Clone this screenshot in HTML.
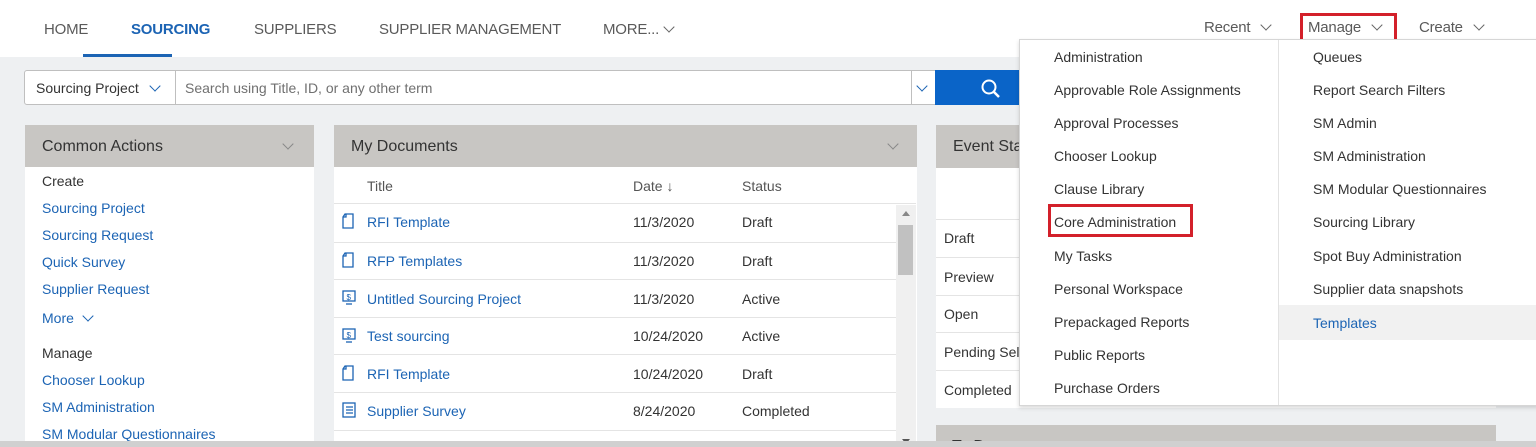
<!DOCTYPE html>
<html><head><meta charset="utf-8"><style>
*{box-sizing:border-box;margin:0;padding:0}
html,body{width:1536px;height:447px;overflow:hidden}
body{background:#eef0f2;font-family:"Liberation Sans",Arial,sans-serif;position:relative;color:#333;font-size:14px}
.abs{position:absolute}
.top{left:0;top:0;width:1536px;height:57px;background:#fff}
.nav{top:21px;font-size:15px;color:#5a5a5a;letter-spacing:-0.2px}
.blue{color:#1c64b4}
.chev{display:inline-block;width:8px;height:8px;border-right:1.3px solid #666;border-bottom:1.3px solid #666;transform:rotate(45deg);margin-left:8px;position:relative;top:-3px}
.panel{background:#fff}
.ph{background:#c8c6c3;height:42px;font-size:16px;color:#333;padding:13px 0 0 17px;position:relative}
.row{position:absolute;font-size:14px}
.line{position:absolute;height:1px;background:#e4e4e4}
.mi{position:absolute;font-size:14px;color:#333}
</style></head><body>
<div class="abs top"></div>
<div class="abs nav" style="left:44px">HOME</div>
<div class="abs nav" style="left:131px;color:#1c64b4;font-weight:bold">SOURCING</div>
<div class="abs" style="left:83px;top:54px;width:89px;height:3px;background:#1c64b4"></div>
<div class="abs nav" style="left:254px">SUPPLIERS</div>
<div class="abs nav" style="left:379px">SUPPLIER MANAGEMENT</div>
<div class="abs nav" style="left:603px">MORE...<span class="chev" style="margin-left:6px"></span></div>
<div class="abs nav" style="left:1204px;top:19px">Recent<span class="chev" style="margin-left:12px"></span></div>
<div class="abs nav" style="left:1308px;top:19px">Manage<span class="chev" style="margin-left:12px"></span></div>
<div class="abs" style="left:1300px;top:13px;width:97px;height:30px;border:3px solid #d3202a"></div>
<div class="abs nav" style="left:1419px;top:19px">Create<span class="chev" style="margin-left:12px"></span></div>

<!-- search -->
<div class="abs" style="left:24px;top:70px;width:996px;height:35px;background:#fff;border:1px solid #bfbfbf;border-radius:3px 0 0 3px"></div>
<div class="abs" style="left:36px;top:80px;font-size:14px;color:#333">Sourcing Project<span class="chev" style="margin-left:12px;border-color:#1c64b4"></span></div>
<div class="abs" style="left:175px;top:70px;width:1px;height:35px;background:#bfbfbf"></div>
<div class="abs" style="left:185px;top:80px;font-size:14px;color:#707070">Search using Title, ID, or any other term</div>
<div class="abs" style="left:911px;top:70px;width:1px;height:35px;background:#bfbfbf"></div>
<div class="abs" style="left:918px;top:80px"><span class="chev" style="margin:0;border-color:#1c64b4"></span></div>
<div class="abs" style="left:935px;top:70px;width:90px;height:35px;background:#0a64c8"></div>
<svg class="abs" style="left:980px;top:78px" width="22" height="22" viewBox="0 0 22 22"><circle cx="9" cy="9" r="6.5" fill="none" stroke="#fff" stroke-width="2"/><line x1="13.5" y1="13.5" x2="19" y2="19" stroke="#fff" stroke-width="2.5"/></svg>

<!-- common actions -->
<div class="abs panel" style="left:25px;top:125px;width:289px;height:330px">
<div class="ph">Common Actions<span class="chev" style="position:absolute;right:22px;top:15px;border-color:#888"></span></div>
</div>
<div class="row" style="left:42px;top:173px">Create</div>
<div class="row blue" style="left:42px;top:200px">Sourcing Project</div>
<div class="row blue" style="left:42px;top:227px">Sourcing Request</div>
<div class="row blue" style="left:42px;top:254px">Quick Survey</div>
<div class="row blue" style="left:42px;top:281px">Supplier Request</div>
<div class="row blue" style="left:42px;top:310px">More<span class="chev" style="margin-left:10px;border-color:#1c64b4"></span></div>
<div class="row" style="left:42px;top:345px">Manage</div>
<div class="row blue" style="left:42px;top:372px">Chooser Lookup</div>
<div class="row blue" style="left:42px;top:399px">SM Administration</div>
<div class="row blue" style="left:42px;top:426px">SM Modular Questionnaires</div>

<!-- my documents -->
<div class="abs panel" style="left:334px;top:125px;width:583px;height:330px">
<div class="ph">My Documents<span class="chev" style="position:absolute;right:20px;top:15px;border-color:#888"></span></div>
</div>
<div class="row" style="left:367px;top:178px;color:#555">Title</div>
<div class="row" style="left:633px;top:178px;color:#555">Date ↓</div>
<div class="row" style="left:742px;top:178px;color:#555">Status</div>
<div class="line" style="left:334px;top:203px;width:582px"></div>
<div class="abs" style="left:896px;top:205px;width:20px;height:240px;background:#f0f0f0"></div>
<div class="abs" style="left:898px;top:225px;width:15px;height:50px;background:#c1c1c1"></div>
<div class="abs" style="left:902px;top:211px;width:0;height:0;border:4px solid transparent;border-bottom:5px solid #888;border-top:0"></div>
<div class="abs" style="left:902px;top:439px;width:0;height:0;border:4px solid transparent;border-top:5px solid #555;border-bottom:0"></div>

<div class="row blue" style="left:367px;top:214px">RFI Template</div><div class="row" style="left:633px;top:214px">11/3/2020</div><div class="row" style="left:742px;top:214px">Draft</div>
<div class="line" style="left:334px;top:242px;width:562px"></div>
<div class="row blue" style="left:367px;top:253px">RFP Templates</div><div class="row" style="left:633px;top:253px">11/3/2020</div><div class="row" style="left:742px;top:253px">Draft</div>
<div class="line" style="left:334px;top:279px;width:562px"></div>
<div class="row blue" style="left:367px;top:291px">Untitled Sourcing Project</div><div class="row" style="left:633px;top:291px">11/3/2020</div><div class="row" style="left:742px;top:291px">Active</div>
<div class="line" style="left:334px;top:317px;width:562px"></div>
<div class="row blue" style="left:367px;top:328px">Test sourcing</div><div class="row" style="left:633px;top:328px">10/24/2020</div><div class="row" style="left:742px;top:328px">Active</div>
<div class="line" style="left:334px;top:354px;width:562px"></div>
<div class="row blue" style="left:367px;top:366px">RFI Template</div><div class="row" style="left:633px;top:366px">10/24/2020</div><div class="row" style="left:742px;top:366px">Draft</div>
<div class="line" style="left:334px;top:392px;width:562px"></div>
<div class="row blue" style="left:367px;top:403px">Supplier Survey</div><div class="row" style="left:633px;top:403px">8/24/2020</div><div class="row" style="left:742px;top:403px">Completed</div>
<div class="line" style="left:334px;top:430px;width:562px"></div>
<svg class="abs" style="left:341px;top:212px" width="16" height="210" viewBox="0 0 16 210" fill="none" stroke="#1c64b4" stroke-width="1.3">
<path d="M4 2h8v14H2V5z M2 5h3V2"/><path d="M4 41h8v14H2V44z M2 44h3V41"/>
<rect x="2" y="79" width="12" height="10"/><path d="M5 92h6"/><text x="5.5" y="88" font-size="8" fill="#1c64b4" stroke="none">$</text>
<rect x="2" y="117" width="12" height="10"/><path d="M5 130h6"/><text x="5.5" y="126" font-size="8" fill="#1c64b4" stroke="none">$</text>
<path d="M4 154h8v14H2V157z M2 157h3V154"/>
<rect x="2" y="191" width="12" height="14"/><path d="M5 195h7M5 198h7M5 201h7"/>
</svg>

<!-- event status -->
<div class="abs panel" style="left:936px;top:125px;width:560px;height:283px">
<div class="ph" style="height:43px">Event Status</div>
</div>
<div class="line" style="left:936px;top:219px;width:560px"></div>
<div class="row" style="left:944px;top:230px">Draft</div>
<div class="line" style="left:936px;top:257px;width:560px"></div>
<div class="row" style="left:944px;top:269px">Preview</div>
<div class="line" style="left:936px;top:295px;width:560px"></div>
<div class="row" style="left:944px;top:306px">Open</div>
<div class="line" style="left:936px;top:332px;width:560px"></div>
<div class="row" style="left:944px;top:344px">Pending Selection</div>
<div class="line" style="left:936px;top:370px;width:560px"></div>
<div class="row" style="left:944px;top:382px">Completed</div>
<div class="abs" style="left:936px;top:425px;width:560px;height:30px;background:#c8c6c3"></div>
<div class="abs" style="left:952px;top:438px;font-size:16px">To Do</div>
<div class="abs" style="left:0;top:441px;width:1536px;height:6px;background:#d0d0d0"></div>

<!-- dropdown menu -->
<div class="abs" style="left:1019px;top:39px;width:520px;height:367px;background:#fff;border:1px solid #d6d6d6;box-shadow:0 2px 4px rgba(0,0,0,.15)"></div>
<div class="abs" style="left:1278px;top:40px;width:1px;height:365px;background:#e2e2e2"></div>
<div class="abs" style="left:1279px;top:305px;width:257px;height:35px;background:#f1f1f1"></div>
<div class="mi" style="left:1054px;top:49px">Administration</div>
<div class="mi" style="left:1054px;top:82px">Approvable Role Assignments</div>
<div class="mi" style="left:1054px;top:115px">Approval Processes</div>
<div class="mi" style="left:1054px;top:148px">Chooser Lookup</div>
<div class="mi" style="left:1054px;top:181px">Clause Library</div>
<div class="mi" style="left:1054px;top:214px">Core Administration</div>
<div class="abs" style="left:1048px;top:204px;width:145px;height:33px;border:3px solid #d3202a"></div>
<div class="mi" style="left:1054px;top:248px">My Tasks</div>
<div class="mi" style="left:1054px;top:281px">Personal Workspace</div>
<div class="mi" style="left:1054px;top:314px">Prepackaged Reports</div>
<div class="mi" style="left:1054px;top:347px">Public Reports</div>
<div class="mi" style="left:1054px;top:380px">Purchase Orders</div>
<div class="mi" style="left:1313px;top:49px">Queues</div>
<div class="mi" style="left:1313px;top:82px">Report Search Filters</div>
<div class="mi" style="left:1313px;top:115px">SM Admin</div>
<div class="mi" style="left:1313px;top:148px">SM Administration</div>
<div class="mi" style="left:1313px;top:181px">SM Modular Questionnaires</div>
<div class="mi" style="left:1313px;top:214px">Sourcing Library</div>
<div class="mi" style="left:1313px;top:248px">Spot Buy Administration</div>
<div class="mi" style="left:1313px;top:281px">Supplier data snapshots</div>
<div class="mi" style="left:1313px;top:315px;color:#1c64b4">Templates</div>
</body></html>
